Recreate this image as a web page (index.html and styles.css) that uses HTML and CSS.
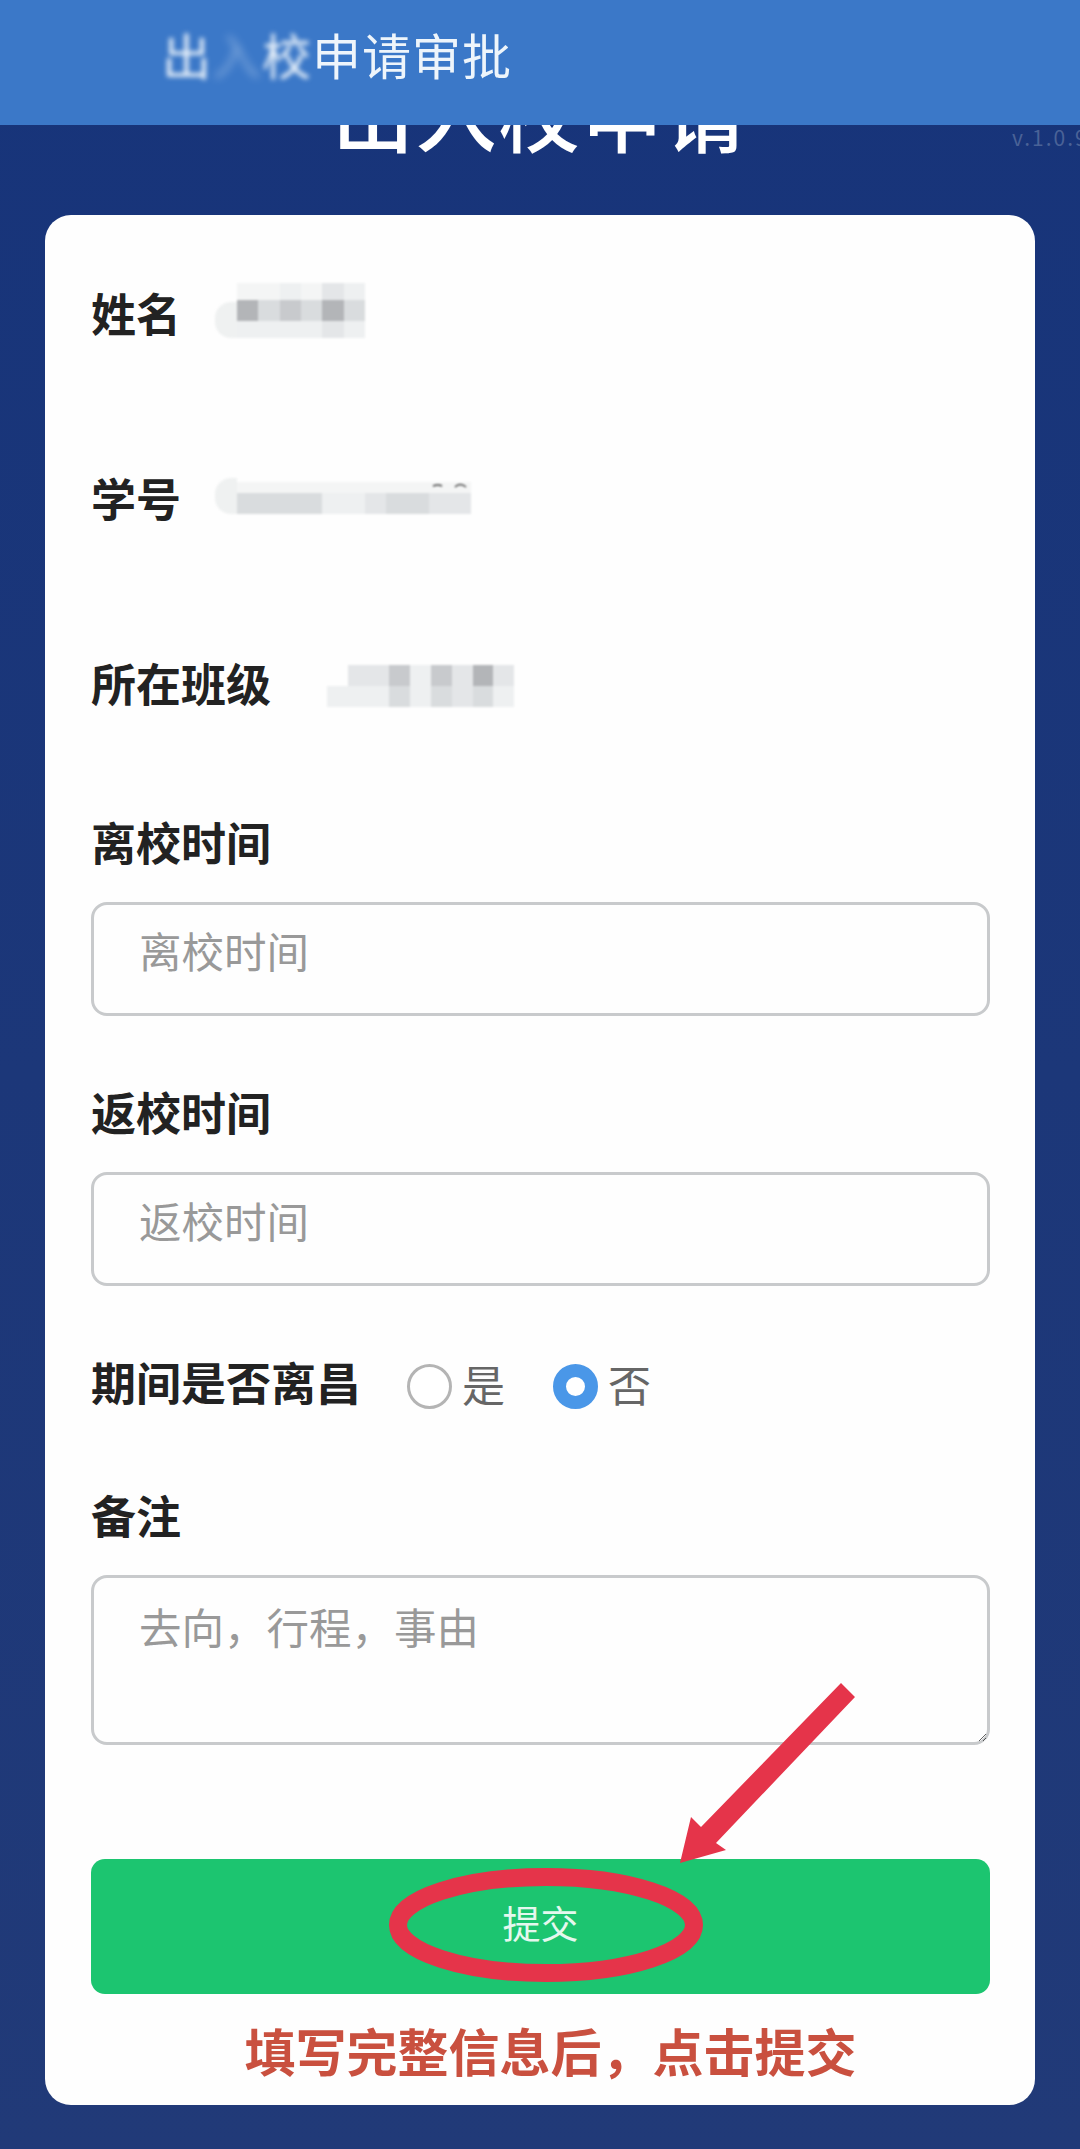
FILE: index.html
```html
<!DOCTYPE html>
<html lang="zh-CN">
<head>
    <meta charset="UTF-8">
    <meta name="viewport" content="width=device-width, initial-scale=1.0">
    <title>出入校申请审批</title>
    <link rel="stylesheet" href="styles.css">
</head>
<body>
<div class="page">
    <header class="topbar">
        <span class="topbar-title"><span class="smudge">出</span><span class="smudge-heavy">入</span><span class="smudge">校</span>申请审批</span>
    </header>

    <div class="hero">
        <h1 class="hero-title">出入校申请</h1>
        <span class="version">v.1.0.9</span>
    </div>

    <form class="card">
        <!-- Student info, mosaicked in the source -->
        <div class="info-row">
            <span class="field-label">姓名</span>
            <div class="mosaic mosaic-name">
                <i class="s1"></i><i class="s1"></i><i class="s2"></i><i class="s1"></i><i class="s3"></i><i class="s2"></i>
                <i class="s6"></i><i class="s4"></i><i class="s5"></i><i class="s4"></i><i class="s6"></i><i class="s4"></i>
                <i class="s2"></i><i class="s2"></i><i class="s2"></i><i class="s2"></i><i class="s3"></i><i class="s2"></i>
            </div>
        </div>

        <div class="info-row">
            <span class="field-label">学号</span>
            <div class="mosaic mosaic-number">
                <i class="s4"></i><i class="s4"></i><i class="s4"></i><i class="s4"></i><i class="s2"></i><i class="s2"></i><i class="s3"></i><i class="s4"></i><i class="s4"></i><i class="s3"></i><i class="s3"></i>
                <svg class="mosaic-marks" width="40" height="10" viewBox="0 0 40 10"><path d="M2 5q5-2 9 0M24 6q5-5 11 0" fill="none" stroke="#444" stroke-width="1.5"/></svg>
            </div>
        </div>

        <div class="info-row info-row-last">
            <span class="field-label">所在班级</span>
            <div class="mosaic mosaic-class">
                <i class="s0"></i><i class="s3"></i><i class="s3"></i><i class="s5"></i><i class="s2"></i><i class="s5"></i><i class="s3"></i><i class="s6"></i><i class="s3"></i>
                <i class="s2"></i><i class="s2"></i><i class="s2"></i><i class="s4"></i><i class="s2"></i><i class="s4"></i><i class="s3"></i><i class="s4"></i><i class="s2"></i>
            </div>
        </div>

        <label class="field-label" for="leaveTime">离校时间</label>
        <input class="text-input" type="text" id="leaveTime" placeholder="离校时间">

        <label class="field-label field-next" for="backTime">返校时间</label>
        <input class="text-input" type="text" id="backTime" placeholder="返校时间">

        <div class="radio-row">
            <span class="field-label">期间是否离昌</span>
            <label class="radio-item"><input type="radio" name="away">是</label>
            <label class="radio-item"><input type="radio" name="away" checked>否</label>
        </div>

        <label class="field-label" for="remark">备注</label>
        <textarea class="text-area" id="remark" placeholder="去向，行程，事由"></textarea>

        <button class="submit-btn" type="button">提交</button>
        <p class="hint">填写完整信息后，点击提交</p>
    </form>

    <!-- Red annotation drawn over the screenshot -->
    <svg class="markup" width="1080" height="2149" viewBox="0 0 1080 2149">
        <ellipse cx="546" cy="1925" rx="148" ry="48" fill="none" stroke="#e5344a" stroke-width="18"/>
        <path d="M841 1683L855 1697L716 1843L726 1850L680 1863L691 1817L701 1827Z" fill="#e5344a"/>
    </svg>
</div>
</body>
</html>
```

FILE: styles.css
```css
* {
    box-sizing: border-box;
}

body {
    margin: 0;
    font-family: "Noto Sans CJK SC", "Noto Sans", sans-serif;
    color: #222;
}

.page {
    position: relative;
    width: 1080px;
    height: 2149px;
    overflow: hidden;
    background: linear-gradient(#17347a, #213a78);
}

.topbar {
    position: relative;
    z-index: 1;
    height: 125px;
    padding-left: 162px;
    display: flex;
    align-items: center;
    background-color: #3b78c8;
}

.topbar-title {
    font-size: 49px;
    letter-spacing: 1px;
    color: #eef5fb;
    margin-top: -19px;
}

.smudge {
    filter: blur(2.5px);
    display: inline-block;
}

.smudge-heavy {
    filter: blur(4px);
    opacity: 0.35;
    display: inline-block;
}

.hero {
    position: relative;
    height: 144px;
    margin-top: -54px;
}

.hero-title {
    margin: 0;
    text-align: center;
    font-size: 81px;
    line-height: 80px;
    font-weight: 500;
    letter-spacing: 2px;
    color: #fff;
}

.version {
    position: absolute;
    left: 1012px;
    top: 53px;
    font-size: 21px;
    line-height: 26px;
    letter-spacing: 2px;
    white-space: nowrap;
    color: #4a6297;
}

.card {
    width: 990px;
    height: 1890px;
    margin: 0 0 0 45px;
    padding: 67px 45px 0 46px;
    background: #fefefe;
    border-radius: 26px;
}

.field-label {
    display: block;
    height: 64px;
    line-height: 61px;
    font-size: 45px;
    font-weight: 700;
    color: #222;
    white-space: nowrap;
}

.info-row {
    display: flex;
    height: 64px;
    margin-bottom: 121px;
    align-items: center;
}

.info-row-last {
    margin-bottom: 95px;
}

.mosaic {
    display: grid;
    grid-auto-rows: 21px;
    position: relative;
    filter: blur(1px);
}

.mosaic i {
    display: block;
}

.mosaic::before {
    content: "";
    position: absolute;
    left: -22px;
    bottom: 0;
    width: 22px;
    height: 36px;
    border-radius: 16px 0 0 16px;
    background: #eff1f1;
}

.mosaic-name {
    grid-template-columns: repeat(6, 21.3px);
    grid-template-rows: 17px 21px 17px;
    margin-left: 56px;
    margin-top: -7px;
}

.mosaic-number {
    grid-template-columns: repeat(11, 21.3px);
    margin-left: 56px;
    margin-top: 9px;
    box-shadow: 0 -11px 0 0 #f4f5f5;
}

.mosaic-class {
    grid-template-columns: repeat(9, 20.8px);
    margin-left: 56px;
    margin-top: 4px;
}

.mosaic-class::before {
    display: none;
}

.mosaic-marks {
    position: absolute;
    right: 0;
    top: -12px;
}

.s0 { background: transparent; }
.s1 { background: #f4f5f5; }
.s2 { background: #eef0f1; }
.s3 { background: #e4e6e8; }
.s4 { background: #d9dcde; }
.s5 { background: #c8cacd; }
.s6 { background: #b3b5b8; }

.text-input,
.text-area {
    display: block;
    width: 899px;
    border: 3px solid #c8cacc;
    border-radius: 16px;
    padding: 0 45px;
    background: #fefefe;
    font-family: inherit;
    font-size: 42.5px;
    color: #333;
    outline: none;
}

.text-input {
    height: 114px;
    margin-top: 27px;
    margin-bottom: 65px;
    padding-bottom: 20px;
}

.text-input::placeholder,
.text-area::placeholder {
    color: #999;
    opacity: 1;
}

.radio-row {
    display: flex;
    align-items: center;
    height: 64px;
    margin-top: 1px;
    margin-bottom: 69px;
}

.radio-item {
    display: flex;
    align-items: center;
    gap: 10px;
    font-size: 43px;
    color: #666;
}

.radio-row .field-label {
    margin-right: 46px;
}

.radio-item + .radio-item {
    margin-left: 48px;
}

.radio-item input {
    appearance: none;
    width: 45px;
    height: 45px;
    margin: 6px 0 0;
    border: 3px solid #b4b4b4;
    border-radius: 50%;
    background: #fff;
}

.radio-item input:checked {
    border: 13px solid #4a97e8;
}

.text-area {
    height: 170px;
    margin-top: 27px;
    padding-top: 22px;
    line-height: 1.2;
}

.submit-btn {
    display: block;
    width: 899px;
    height: 135px;
    margin-top: 114px;
    padding-bottom: 11px;
    border: none;
    border-radius: 14px;
    background-color: #1cc570;
    color: #e4f8ee;
    font-family: inherit;
    font-size: 38px;
    cursor: pointer;
}

.hint {
    margin: 24px 0 0;
    padding-left: 20px;
    text-align: center;
    font-size: 51px;
    line-height: 64px;
    font-weight: 700;
    color: #c9503f;
    white-space: nowrap;
}

.markup {
    position: absolute;
    left: 0;
    top: 0;
    pointer-events: none;
}
```
